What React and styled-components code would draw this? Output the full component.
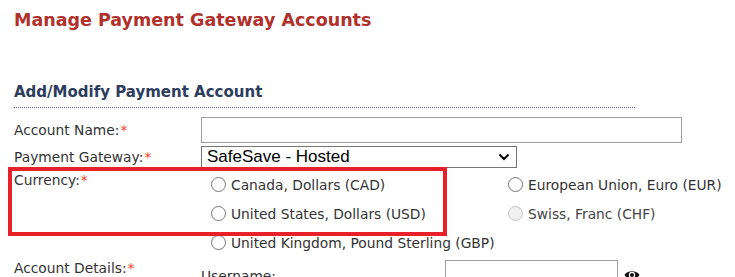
import React from "react";
import styled, { createGlobalStyle } from "styled-components";

const Global = createGlobalStyle`
  html, body { margin: 0; padding: 0; background: #fff; }
  body { font-family: "DejaVu Sans", Verdana, sans-serif; overflow: hidden; }
`;

const Page = styled.div`
  width: 735px;
  height: 277px;
  padding: 0 14px;
  box-sizing: border-box;
  overflow: hidden;
`;

const Title = styled.h1`
  margin: 0;
  padding-top: 10px;
  height: 74px;
  box-sizing: border-box;
  font-size: 17.5px;
  line-height: 20px;
  font-weight: bold;
  color: #b0312b;
`;

const Section = styled.h2`
  margin: 0;
  width: 621px;
  height: 34px;
  box-sizing: border-box;
  padding-top: 9px;
  font-size: 15px;
  line-height: 18px;
  font-weight: bold;
  color: #2d3d5b;
  border-bottom: 1px dotted #555a70;
`;

const Form = styled.div`
  display: grid;
  grid-template-columns: 187px 1fr;
  padding-top: 9px;
`;

const Label = styled.div`
  font-size: 13.8px;
  color: #333;
  height: ${(p) => p.$h}px;
  display: flex;
  align-items: ${(p) => (p.$top ? "flex-start" : "center")};
  padding-top: ${(p) => p.$pt || 0}px;
  box-sizing: border-box;
  margin-bottom: ${(p) => p.$mb || 0}px;
  white-space: nowrap;
`;

const Req = styled.span`
  color: #ff3b1f;
  margin-left: 1px;
`;

const Field = styled.div`
  height: ${(p) => p.$h}px;
  margin-bottom: ${(p) => p.$mb || 0}px;
  display: flex;
  align-items: center;
`;

const TextBox = styled.div`
  width: ${(p) => p.$w}px;
  height: ${(p) => p.$h}px;
  border: 1px solid #a0a0a0;
  box-sizing: border-box;
  background: #fff;
  flex: none;
`;

const Select = styled.div`
  width: 316px;
  height: 22px;
  border: 1px solid #767676;
  box-sizing: border-box;
  display: flex;
  align-items: center;
  justify-content: space-between;
  padding: 0 6px 0 5px;
  font-family: "Liberation Sans", Arial, sans-serif;
  font-size: 17px;
  color: #000;
`;

const CurrencyRow = styled.div`
  grid-column: 1 / -1;
  display: grid;
  grid-template-columns: 187px 1fr;
  position: relative;
`;

const Highlight = styled.div`
  position: absolute;
  left: -6px;
  top: -1px;
  width: 439px;
  height: 69px;
  border: 4px solid #e8202a;
  box-sizing: border-box;
  pointer-events: none;
`;

const RadioGrid = styled.div`
  display: grid;
  grid-template-columns: 297px 1fr;
  grid-auto-rows: 29px;
  padding: 2px 0 0 10px;
`;

const RadioItem = styled.div`
  display: flex;
  align-items: center;
  gap: 5px;
  font-size: 13.8px;
  white-space: nowrap;
  color: ${(p) => (p.$disabled ? "#444" : "#333")};
`;

const Circle = styled.span`
  width: 15px;
  height: 15px;
  border-radius: 50%;
  box-sizing: border-box;
  border: 1px solid ${(p) => (p.$disabled ? "#c6c6c6" : "#767676")};
  background: ${(p) => (p.$disabled ? "#f0f0f0" : "#fff")};
  flex: none;
`;

const Details = styled.div`
  display: flex;
  align-items: flex-start;
  padding-top: 2px;
  font-size: 13.8px;
  color: #333;
`;

const SubLabel = styled.span`
  width: 244px;
  padding-top: 8px;
  flex: none;
`;

const EyeWrap = styled.span`
  margin-left: 6px;
  margin-top: 9px;
  display: flex;
`;

const Radio = ({ label, disabled }) => (
  <RadioItem $disabled={disabled}>
    <Circle $disabled={disabled} />
    {label}
  </RadioItem>
);

export default function App() {
  return (
    <>
      <Global />
      <Page>
        <Title>Manage Payment Gateway Accounts</Title>
        <Section>Add/Modify Payment Account</Section>
        <Form>
          <Label $h={26} $mb={3}>
            Account Name:<Req>*</Req>
          </Label>
          <Field $h={26} $mb={3}>
            <TextBox $w={481} $h={26} />
          </Field>
          <Label $h={22}>
            Payment Gateway:<Req>*</Req>
          </Label>
          <Field $h={22}>
            <Select>
              <span>SafeSave - Hosted</span>
              <svg width="12" height="8" viewBox="0 0 12 8">
                <path d="M1.5 1.5 L6 6 L10.5 1.5" fill="none" stroke="#000" strokeWidth="2" />
              </svg>
            </Select>
          </Field>
          <CurrencyRow>
            <Highlight />
            <Label $h={90} $top $pt={4}>
              Currency:<Req>*</Req>
            </Label>
            <RadioGrid>
              <Radio label="Canada, Dollars (CAD)" />
              <Radio label="European Union, Euro (EUR)" />
              <Radio label="United States, Dollars (USD)" />
              <Radio label="Swiss, Franc (CHF)" disabled />
              <Radio label="United Kingdom, Pound Sterling (GBP)" />
            </RadioGrid>
          </CurrencyRow>
          <Label $h={40} $top $pt={2}>
            Account Details:<Req>*</Req>
          </Label>
          <Details>
            <SubLabel>Username:</SubLabel>
            <TextBox $w={173} $h={28} />
            <EyeWrap>
              <svg width="16" height="12" viewBox="0 0 16 12">
                <path d="M0.5 6 C3 1 13 1 15.5 6 C13 11 3 11 0.5 6 Z" fill="#111" />
                <circle cx="8" cy="6" r="3.2" fill="#fff" />
                <circle cx="8" cy="6" r="2" fill="#111" />
              </svg>
            </EyeWrap>
          </Details>
        </Form>
      </Page>
    </>
  );
}
